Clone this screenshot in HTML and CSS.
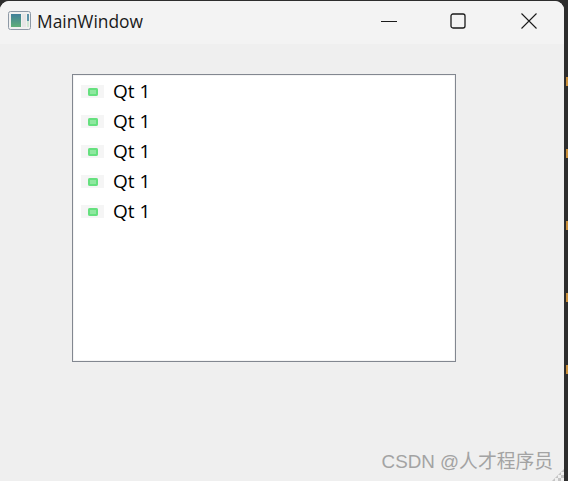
FILE: index.html
```html
<!DOCTYPE html>
<html lang="en">
  <head>
    <meta charset="UTF-8" />
    <title>MainWindow</title>
    <link rel="stylesheet" href="styles.css">
  </head>
  <body>
    <div class="window">
      <div class="titlebar">
        <svg class="app-icon" width="24" height="20" viewBox="0 0 24 20">
          <defs>
            <linearGradient id="pane" x1="0" y1="0" x2="0" y2="1">
              <stop offset="0" stop-color="#3f7f9a" />
              <stop offset="1" stop-color="#5fae78" />
            </linearGradient>
          </defs>
          <rect x="0.5" y="0.5" width="22" height="18" rx="2" fill="#f0f0f0" stroke="#8d99a6" />
          <rect x="3" y="3" width="10" height="13" fill="url(#pane)" />
          <rect x="14" y="3" width="4" height="13" fill="#e6e6e6" />
          <rect x="19" y="3" width="2" height="7" fill="#5b93a8" />
          <rect x="19" y="10" width="2" height="6" fill="#cfe6d4" />
        </svg>
        <span class="title">MainWindow</span>
        <div class="controls">
          <button class="control">
            <svg width="16" height="16" viewBox="0 0 16 16"><path d="M0 8.5H16" stroke="#1a1a1a" fill="none" /></svg>
          </button>
          <button class="control control-max">
            <svg width="16" height="16" viewBox="0 0 16 16"><rect x="1" y="1" width="14" height="14" rx="2" stroke="#1a1a1a" stroke-width="1.3" fill="none" /></svg>
          </button>
          <button class="control">
            <svg width="16" height="16" viewBox="0 0 16 16"><path d="M0.5 0.5L15.5 15.5M15.5 0.5L0.5 15.5" stroke="#1a1a1a" stroke-width="1.1" fill="none" /></svg>
          </button>
        </div>
      </div>
      <div class="content">
        <ul class="list">
          <li class="item"><span class="item-icon"><span class="item-chip"></span></span>Qt 1</li>
          <li class="item"><span class="item-icon"><span class="item-chip"></span></span>Qt 1</li>
          <li class="item"><span class="item-icon"><span class="item-chip"></span></span>Qt 1</li>
          <li class="item"><span class="item-icon"><span class="item-chip"></span></span>Qt 1</li>
          <li class="item"><span class="item-icon"><span class="item-chip"></span></span>Qt 1</li>
        </ul>
      </div>
    </div>
    <div class="edge">
      <span class="mark"></span>
      <span class="mark"></span>
      <span class="mark"></span>
      <span class="mark"></span>
      <span class="mark"></span>
    </div>
    <div class="watermark">CSDN @人才程序员</div>
    <div class="grip"></div>
  </body>
</html>
```

FILE: styles.css
```css
html,
body {
  height: 100%;
}
body {
  margin: 0;
  display: flex;
  overflow: hidden;
  background: #2d2d2d;
  font-family: "Open Sans", "Noto Sans", sans-serif;
  color: #000;
}
.window {
  width: 564px;
  margin-top: 1px;
  display: flex;
  flex-direction: column;
  background: #efefef;
  border-top-right-radius: 9px;
  border-top-left-radius: 9px;
}
.titlebar {
  height: 43px;
  box-sizing: border-box;
  display: flex;
  align-items: center;
  padding: 0 0 3px 8px;
  background: #f3f3f3;
  border-top-right-radius: 9px;
  border-top-left-radius: 9px;
}
.title {
  margin-left: 5px;
  font-size: 17.4px;
  color: #1a1a1a;
}
.controls {
  margin-left: auto;
  display: flex;
}
.control {
  width: 70px;
  height: 40px;
  padding: 0;
  border: 0;
  background: none;
  display: flex;
  align-items: center;
  justify-content: center;
}
.control-max {
  padding-right: 2px;
}
.content {
  flex: 1;
  padding: 30px 0 0 72px;
}
.list {
  width: 384px;
  height: 288px;
  margin: 0;
  padding: 1px 0 0 8px;
  box-sizing: border-box;
  list-style: none;
  background: #fff;
  border: 1px solid #828790;
  box-shadow: inset 0 0 0 1px #f4f4f4;
}
.item {
  height: 30px;
  display: flex;
  align-items: center;
  font-size: 19px;
}
.item-icon {
  width: 23px;
  height: 13px;
  margin: 1px 9px 0 0;
  display: flex;
  align-items: center;
  justify-content: center;
  background: #f5f5f5;
}
.item-chip {
  width: 10px;
  height: 8px;
  background: #8fe8a0;
  border-radius: 2px;
  box-shadow: inset 0 0 0 2px #66e07f;
}
.edge {
  flex: 1;
  display: flex;
  flex-direction: column;
  align-items: flex-end;
  padding-top: 77px;
  gap: 63px;
}
.mark {
  width: 2px;
  height: 9px;
  flex: none;
  background: #c98f3a;
}
.watermark {
  position: absolute;
  right: 15px;
  bottom: 8px;
  font-size: 18.8px;
  color: #a3a3a3;
  font-family: "Liberation Sans", "Noto Sans CJK SC", sans-serif;
}
.grip {
  position: absolute;
  right: 4px;
  bottom: 0;
  width: 12px;
  height: 12px;
  background: repeating-conic-gradient(#c4c4c4 0 25%, transparent 0 50%) 0 0 / 6px 6px;
  clip-path: polygon(100% 0, 100% 100%, 0 100%);
}
```
